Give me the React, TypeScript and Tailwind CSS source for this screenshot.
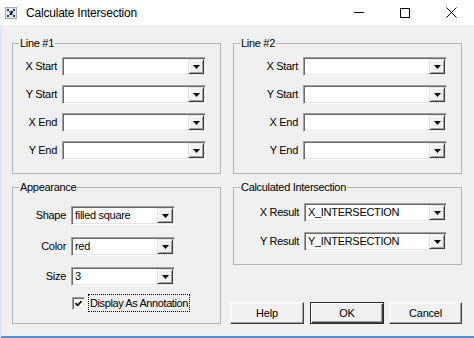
import clsx from 'clsx'
import type { ReactNode } from 'react'

const FONT = "font-['Liberation_Sans',Arial,sans-serif]"

function DropArrow() {
  return (
    <div className="flex h-full w-[16px] shrink-0 items-center justify-center border border-b-[#404040] border-l-[#e3e3e3] border-r-[#404040] border-t-[#e3e3e3] bg-[#f0f0f0] shadow-[inset_1px_1px_0_#ffffff,inset_-1px_-1px_0_#a0a0a0]">
      <svg width="7" height="4" viewBox="0 0 7 4" className="mt-[1px]">
        <path d="M0 0h7L3.5 4z" fill="#000" />
      </svg>
    </div>
  )
}

function Combo({ value = '', className }: { value?: string; className: string }) {
  return (
    <div
      className={clsx(
        'flex h-[19px] border border-b-white border-l-[#a0a0a0] border-r-white border-t-[#a0a0a0] bg-white p-[1px] shadow-[inset_1px_1px_0_#696969,inset_-1px_-1px_0_#e3e3e3]',
        className,
      )}>
      <span className="flex-1 truncate pl-[2px] text-[11px] leading-[15px] tracking-[-0.3px] text-black">{value}</span>
      <DropArrow />
    </div>
  )
}

function Field({ label, labelW, comboW, value }: { label: string; labelW: string; comboW: string; value?: string }) {
  return (
    <div className="flex items-center">
      <span className={clsx('text-right text-[11px] leading-[13px] tracking-[-0.3px] text-black', labelW)}>{label}</span>
      <Combo value={value} className={clsx('ml-[5px]', comboW)} />
    </div>
  )
}

function Group({ title, children, className }: { title: string; children: ReactNode; className?: string }) {
  return (
    <fieldset className={clsx('border border-[#b4b4b4]', className)}>
      <legend className="ml-[6px] px-[1px] text-[11px] leading-[14px] tracking-[-0.3px] text-black">{title}</legend>
      {children}
    </fieldset>
  )
}

function WinButton({ children, primary, className }: { children: ReactNode; primary?: boolean; className?: string }) {
  return (
    <button
      className={clsx(
        'h-[22px] bg-[#f0f0f0] text-[11px] leading-[13px] tracking-[-0.2px] text-black',
        primary
          ? 'border border-[#2b2b2b] shadow-[inset_1px_1px_0_#ffffff,inset_-1px_-1px_0_#404040,inset_-2px_-2px_0_#a0a0a0]'
          : 'border border-b-[#404040] border-l-white border-r-[#404040] border-t-white shadow-[inset_-1px_-1px_0_#a0a0a0,inset_1px_1px_0_#f8f8f8]',
        className,
      )}>
      {children}
    </button>
  )
}

function AppIcon() {
  return (
    <svg width="12" height="12" viewBox="0 0 12 12">
      <rect x="0.5" y="0.5" width="11" height="11" fill="#e6e6e6" stroke="#a8a8a8" />
      <rect x="2" y="2" width="2" height="2" fill="#2b3f7a" />
      <rect x="8" y="2" width="2" height="2" fill="#2b3f7a" />
      <rect x="4" y="4" width="2" height="2" fill="#5c7fc4" />
      <rect x="6" y="4" width="2" height="2" fill="#1a1a1a" />
      <rect x="5" y="6" width="2" height="2" fill="#1a1a1a" />
      <rect x="2" y="8" width="2" height="2" fill="#2b3f7a" />
      <rect x="8" y="8" width="2" height="2" fill="#2b3f7a" />
      <rect x="4" y="7" width="1" height="1" fill="#5c7fc4" />
      <rect x="7" y="7" width="1" height="1" fill="#5c7fc4" />
    </svg>
  )
}

export default function App() {
  return (
    <div className={clsx('flex h-[338px] w-[474px] flex-col overflow-hidden text-black', FONT)}>
      {/* title bar */}
      <div className="flex h-[25px] shrink-0 items-center bg-white">
        <div className="ml-[5px] mt-[1px]">
          <AppIcon />
        </div>
        <span className="ml-[9px] text-[12px] leading-[14px] tracking-[-0.2px]">Calculate Intersection</span>
        <div className="ml-auto flex h-full">
          <div className="flex h-full w-[46px] items-center justify-center">
            <div className="h-px w-[10px] bg-black" />
          </div>
          <div className="flex h-full w-[46px] items-center justify-center">
            <div className="h-[10px] w-[10px] border border-black" />
          </div>
          <div className="flex h-full w-[46px] items-center justify-center">
            <svg width="11" height="11" viewBox="0 0 11 11">
              <path d="M0.5 0.5l10 10M10.5 0.5l-10 10" stroke="#000" strokeWidth="1" />
            </svg>
          </div>
        </div>
      </div>

      {/* dialog body */}
      <div className="flex-1 border-b-2 border-l-2 border-b-[#4f8fd6] border-l-[#dce8f5] bg-[#f0f0f0] pl-[10px] pt-[11px]">
        <div className="grid grid-cols-[209px_229px] gap-x-[12px] gap-y-[6px]">
          <Group title="Line #1">
            <div className="flex flex-col gap-[9px] pb-[13px] pt-[7px]">
              <Field label="X Start" labelW="w-[44px]" comboW="w-[144px]" />
              <Field label="Y Start" labelW="w-[44px]" comboW="w-[144px]" />
              <Field label="X End" labelW="w-[44px]" comboW="w-[144px]" />
              <Field label="Y End" labelW="w-[44px]" comboW="w-[144px]" />
            </div>
          </Group>

          <Group title="Line #2">
            <div className="flex flex-col gap-[9px] pb-[13px] pt-[7px]">
              <Field label="X Start" labelW="w-[64px]" comboW="w-[144px]" />
              <Field label="Y Start" labelW="w-[64px]" comboW="w-[144px]" />
              <Field label="X End" labelW="w-[64px]" comboW="w-[144px]" />
              <Field label="Y End" labelW="w-[64px]" comboW="w-[144px]" />
            </div>
          </Group>

          <Group title="Appearance">
            <div className="flex flex-col pb-[10px] pt-[12px]">
              <Field label="Shape" labelW="w-[53px]" comboW="w-[104px]" value="filled square" />
              <div className="mt-[12px]">
                <Field label="Color" labelW="w-[53px]" comboW="w-[104px]" value="red" />
              </div>
              <div className="mt-[11px]">
                <Field label="Size" labelW="w-[53px]" comboW="w-[104px]" value="3" />
              </div>
              <div className="ml-[59px] mt-[8px] flex h-[18px] items-center">
                <div className="flex h-[13px] w-[13px] items-center justify-center border border-b-white border-l-[#a0a0a0] border-r-white border-t-[#a0a0a0] bg-white shadow-[inset_1px_1px_0_#696969,inset_-1px_-1px_0_#e3e3e3]">
                  <svg width="7" height="7" viewBox="0 0 7 7">
                    <path d="M0.5 3.2L2.6 5.3L6.5 1.2" stroke="#000" strokeWidth="1.7" fill="none" />
                  </svg>
                </div>
                <span className="ml-[3px] h-[18px] border border-dotted border-black px-[1px] text-[11px] leading-[16px] tracking-[-0.4px]">
                  Display As Annotation
                </span>
              </div>
            </div>
          </Group>

          <div className="flex flex-col">
            <Group title="Calculated Intersection">
              <div className="flex flex-col gap-[10px] pb-[13px] pt-[9px]">
                <Field label="X Result" labelW="w-[65px]" comboW="w-[143px]" value="X_INTERSECTION" />
                <Field label="Y Result" labelW="w-[65px]" comboW="w-[143px]" value="Y_INTERSECTION" />
              </div>
            </Group>
            <div className="ml-[-3px] mt-[37px] flex">
              <WinButton className="w-[75px]">Help</WinButton>
              <WinButton primary className="ml-[6px] w-[75px]">
                OK
              </WinButton>
              <WinButton className="ml-[5px] w-[74px]">Cancel</WinButton>
            </div>
          </div>
        </div>
      </div>
    </div>
  )
}
